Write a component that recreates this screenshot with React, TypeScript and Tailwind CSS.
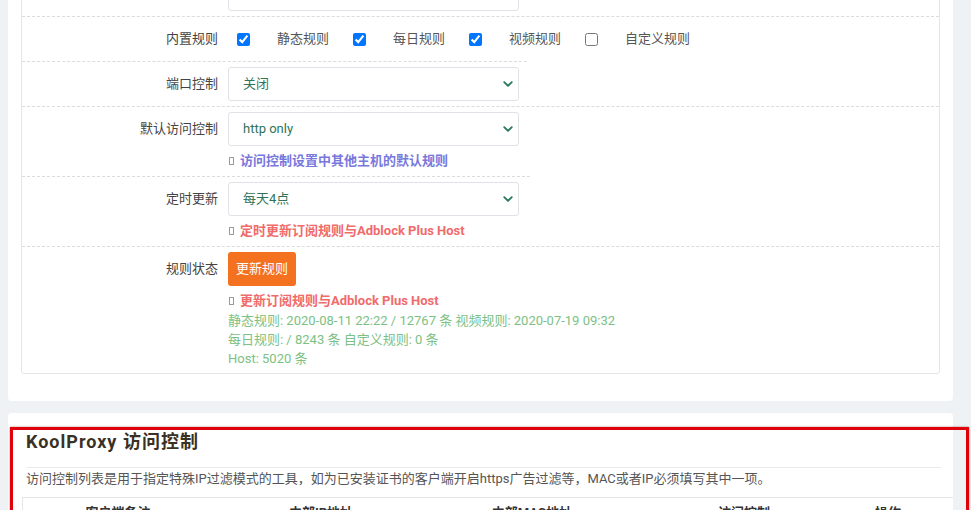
import type { ReactNode } from 'react';

const FONT = { fontFamily: 'Roboto, "Noto Sans CJK SC", sans-serif' };

function Chevron() {
  return (
    <svg width="10" height="10" viewBox="0 0 16 16" fill="none">
      <path d="M2 5l6 6 6-6" stroke="#2b7a5b" strokeWidth="3" strokeLinecap="round" strokeLinejoin="round" />
    </svg>
  );
}

function FakeSelect({ value }: { value: string }) {
  return (
    <div className="flex h-[34px] w-[291px] items-center justify-between rounded-[3px] border border-[#dfe2e6] bg-white pl-[14px] pr-[5px] text-[13px] text-[#2f7457]">
      <span>{value}</span>
      <Chevron />
    </div>
  );
}

function Hint({ tone, children }: { tone: string; children: ReactNode }) {
  return (
    <div className={`mt-[5px] flex items-center text-[13px] font-bold leading-[20px] ${tone}`}>
      <span className="ml-px mr-[6px] inline-block h-[8px] w-[5px] border border-[#9a9a9a]" />
      {children}
    </div>
  );
}

function Row({ label, children }: { label: string; children: ReactNode }) {
  return (
    <div className="flex py-[5px]">
      <div className="flex h-[34px] w-[196px] shrink-0 items-center justify-end text-[13px] text-[#444]">{label}</div>
      <div className="ml-[10px]">{children}</div>
    </div>
  );
}

function Divider({ w }: { w?: string }) {
  return <div className={`border-t border-dashed border-[#dcdcdc] ${w ?? 'w-full'}`} />;
}

// 内置规则 is the row label; each of these is followed by its own checkbox
const rules = [
  { name: '静态规则', on: true },
  { name: '每日规则', on: true },
  { name: '视频规则', on: false },
];

export default function App() {
  return (
    <div className="h-[510px] w-[971px] overflow-hidden bg-[#eff2f4] pl-2 pr-[18px]" style={FONT}>
      <div className="-mt-[49px]">
        <div className="rounded-[4px] bg-white pb-[27px] pl-[13px] pr-[13px] pt-5">
          <div className="rounded-[3px] border border-[#e4e7ea]">
            <Row label="过滤模式"><FakeSelect value="全局模式" /></Row>
            <Divider />

            <div className="flex h-[44px] items-center">
              <div className="w-[196px] shrink-0 text-right text-[13px] text-[#444]">内置规则</div>
              <div className="ml-[10px] flex items-center text-[13px] text-[#555]">
                <input type="checkbox" defaultChecked className="ml-[9px] h-[13px] w-[13px]" />
                {rules.map((r) => (
                  <span key={r.name} className="flex items-center">
                    <span className="ml-[27px]">{r.name}</span>
                    <input type="checkbox" defaultChecked={r.on} className="ml-[24px] h-[13px] w-[13px]" />
                  </span>
                ))}
                <span className="ml-[27px]">自定义规则</span>
              </div>
            </div>
            <Divider w="w-[505px]" />

            <Row label="端口控制"><FakeSelect value="关闭" /></Row>
            <Divider />

            <Row label="默认访问控制">
              <FakeSelect value="http only" />
              <Hint tone="text-[#7878dc]">访问控制设置中其他主机的默认规则</Hint>
            </Row>
            <Divider w="w-[508px]" />

            <Row label="定时更新">
              <FakeSelect value="每天4点" />
              <Hint tone="text-[#f06b6b]">定时更新订阅规则与Adblock Plus Host</Hint>
            </Row>
            <Divider />

            <Row label="规则状态">
              <button className="h-[34px] rounded-[3px] bg-[#f4711f] px-[8px] text-[13px] text-white">更新规则</button>
              <Hint tone="text-[#f06b6b]">更新订阅规则与Adblock Plus Host</Hint>
              <div className="text-[13px] leading-[19px] text-[#7cc183]">
                <div>静态规则: 2020-08-11 22:22 / 12767 条 视频规则: 2020-07-19 09:32</div>
                <div>每日规则: / 8243 条 自定义规则: 0 条</div>
                <div>Host: 5020 条</div>
              </div>
            </Row>
          </div>
        </div>

        <div className="relative mt-[12px] h-[200px] rounded-[4px] bg-white px-[14px] pt-4">
          <div className="pointer-events-none absolute left-[2px] top-[14px] h-[150px] w-[959px] border-[3px] border-[#e0000b] shadow-[0_0_2px_rgba(120,0,0,0.5)]" />
          <div className="-mr-[2px] ml-[4px] border-b border-[#ebebeb] pb-3">
            <h2 className="text-[18px] font-bold leading-[26px] tracking-[1px] text-[#3a3124]">KoolProxy 访问控制</h2>
          </div>
          <p className="ml-[4px] mt-px text-[13px] leading-[20px] text-[#555]">
            访问控制列表是用于指定特殊IP过滤模式的工具，如为已安装证书的客户端开启https广告过滤等，MAC或者IP必须填写其中一项。
          </p>
          <div className="-mr-[14px] mt-[8px] border-l border-t border-[#e6e6e6]">
            <div className="grid grid-cols-[190px_216px_206px_218px_70px] pt-[5px] text-center text-[13px] font-bold leading-[20px] text-[#333]">
              <div>客户端备注</div>
              <div>内部IP地址</div>
              <div>内部MAC地址</div>
              <div>访问控制</div>
              <div>操作</div>
            </div>
          </div>
        </div>
      </div>
    </div>
  );
}
